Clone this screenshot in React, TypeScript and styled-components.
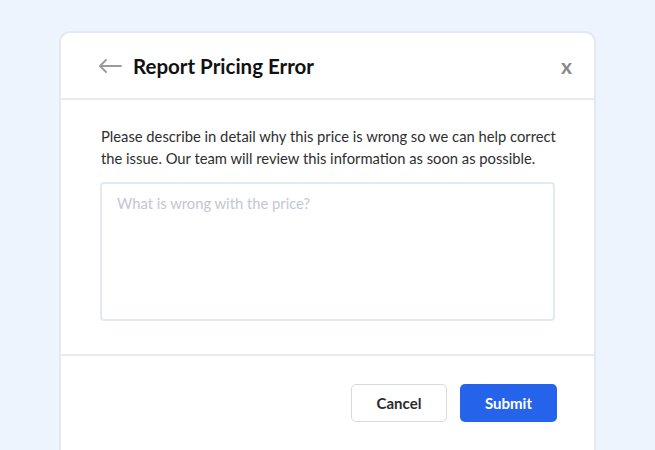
import React from "react";
import styled, { createGlobalStyle } from "styled-components";

const Global = createGlobalStyle`
  html, body { margin: 0; padding: 0; background: #eef4fe; }
  body { font-family: Lato, "Open Sans", sans-serif; }
  * { box-sizing: border-box; }
`;

const Page = styled.div`
  height: 450px;
  overflow: hidden;
  padding: 31px 0 0 59px;
`;

const Card = styled.div`
  width: 537px;
  height: 440px;
  background: #fff;
  border: 2px solid #e3e9f2;
  border-radius: 11px;
  display: flex;
  flex-direction: column;
`;

const Header = styled.div`
  height: 67px;
  display: flex;
  align-items: center;
  padding: 0 22px 0 37px;
  border-bottom: 2px solid #e6ebf2;
`;

const BackButton = styled.button`
  border: none;
  background: none;
  padding: 0;
  width: 24px;
  height: 20px;
  display: flex;
  align-items: center;
  margin-right: 11px;
  cursor: pointer;
`;

const Title = styled.h2`
  margin: 0;
  flex: 1;
  font-size: 20.5px;
  font-weight: 700;
  color: #111;
`;

const Close = styled.button`
  border: none;
  background: none;
  padding: 0;
  font-family: Lato, sans-serif;
  font-size: 21px;
  font-weight: 700;
  color: #8a8a8a;
  cursor: pointer;
`;

const Body = styled.div`
  padding: 25px 39px 33px 39px;
  border-bottom: 2px solid #e6ebf2;
`;

const Description = styled.p`
  margin: 0 0 13px 1px;
  width: 462px;
  font-size: 14.75px;
  line-height: 22px;
  color: #2e2e2e;
`;

const TextArea = styled.textarea`
  display: block;
  width: 455px;
  height: 139px;
  border: 2px solid #e3e9f2;
  border-radius: 4px;
  padding: 9px 15px;
  font-family: Lato, sans-serif;
  font-size: 14.75px;
  line-height: 20px;
  resize: none;
  outline: none;
  color: #333;
  &::placeholder { color: #c1c7d2; }
`;

const Footer = styled.div`
  display: flex;
  justify-content: flex-end;
  gap: 13px;
  padding: 28px 37px 0 0;
`;

const Button = styled.button<{ $primary?: boolean }>`
  height: 38px;
  width: ${(p) => (p.$primary ? "97px" : "96px")};
  border-radius: 5px;
  font-family: Lato, sans-serif;
  font-size: 15px;
  font-weight: 700;
  cursor: pointer;
  border: ${(p) => (p.$primary ? "none" : "1px solid #d5d9e0")};
  background: ${(p) => (p.$primary ? "#2563eb" : "#fff")};
  color: ${(p) => (p.$primary ? "#fff" : "#2b2b2b")};
`;

export default function App() {
  return (
    <Page>
      <Global />
      <Card>
        <Header>
          <BackButton aria-label="Back">
            <svg width="24" height="14" viewBox="0 0 24 14" fill="none">
              <path d="M23 7H2M8 1L2 7l6 6" stroke="#9a9a9a" strokeWidth="1.8" strokeLinecap="round" strokeLinejoin="round" />
            </svg>
          </BackButton>
          <Title>Report Pricing Error</Title>
          <Close aria-label="Close">x</Close>
        </Header>
        <Body>
          <Description>
            Please describe in detail why this price is wrong so we can help correct the issue. Our team will review this information as soon as possible.
          </Description>
          <TextArea placeholder="What is wrong with the price?" />
        </Body>
        <Footer>
          <Button>Cancel</Button>
          <Button $primary>Submit</Button>
        </Footer>
      </Card>
    </Page>
  );
}
